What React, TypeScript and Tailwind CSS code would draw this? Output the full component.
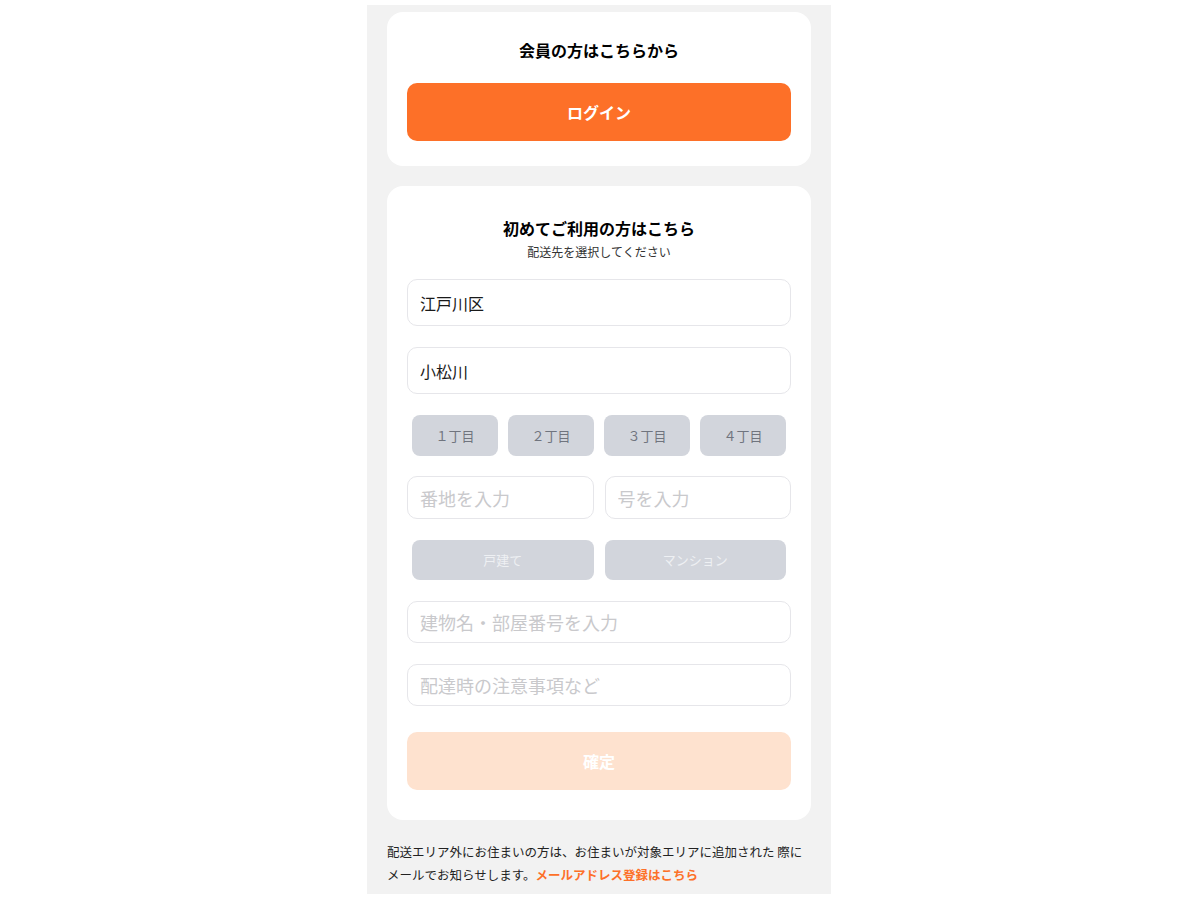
const chome = ['１丁目', '２丁目', '３丁目', '４丁目'];

const inputCls =
    'w-full rounded-[10px] border-[1.5px] border-[#e6e6ea] bg-white px-3 text-[#1a1a1a] outline-none placeholder:text-[#c9c9cc]';

const App = () => {
    return (
        <div className="min-h-screen bg-white py-[5px] pr-[3px]" style={{ fontFamily: '"Noto Sans CJK JP", "Noto Sans", sans-serif' }}>
            <div className="mx-auto w-[464px] bg-[#f2f2f2] px-5 pt-[7px] pb-2">
                {/* Member login */}
                <div className="rounded-2xl bg-white px-5 pt-[26px] pb-[25px]">
                    <h2 className="text-center text-base leading-6 font-bold text-black">会員の方はこちらから</h2>
                    <button className="mt-[21px] flex h-[58px] w-full items-center justify-center rounded-[10px] bg-[#fd7028] text-base font-bold text-white">
                        ログイン
                    </button>
                </div>

                {/* First time */}
                <div className="mt-5 rounded-2xl bg-white px-5 pt-[30px] pb-[30px]">
                    <h2 className="text-center text-base leading-6 font-bold text-black">初めてご利用の方はこちら</h2>
                    <p className="mt-1 text-center text-[12px] leading-4 text-[#333]">配送先を選択してください</p>

                    <input className={`${inputCls} mt-[19px] h-[47px] text-base`} defaultValue="江戸川区" />
                    <input className={`${inputCls} mt-[21px] h-[47px] text-base`} defaultValue="小松川" />

                    <div className="mt-[21px] grid grid-cols-4 gap-[10px] px-[5px]">
                        {chome.map((c) => (
                            <button
                                key={c}
                                className="flex h-[41px] items-center justify-center rounded-lg bg-[#d2d5dc] text-[13px] text-[#70747e]"
                            >
                                {c}
                            </button>
                        ))}
                    </div>

                    <div className="mt-5 grid grid-cols-2 gap-[11px]">
                        <input className={`${inputCls} h-[43px] text-lg`} placeholder="番地を入力" />
                        <input className={`${inputCls} h-[43px] text-lg`} placeholder="号を入力" />
                    </div>

                    <div className="mt-[21px] grid grid-cols-2 gap-[11px] px-[5px]">
                        <button className="flex h-10 items-center justify-center rounded-lg bg-[#d2d5dc] text-[13px] text-[#eef0f3]">
                            戸建て
                        </button>
                        <button className="flex h-10 items-center justify-center rounded-lg bg-[#d2d5dc] text-[13px] text-[#eef0f3]">
                            マンション
                        </button>
                    </div>

                    <input className={`${inputCls} mt-[21px] h-[42px] text-lg`} placeholder="建物名・部屋番号を入力" />
                    <input className={`${inputCls} mt-[21px] h-[42px] text-lg`} placeholder="配達時の注意事項など" />

                    <button className="mt-[26px] flex h-[58px] w-full items-center justify-center rounded-[10px] bg-[#fee2cf] text-base font-bold text-white">
                        確定
                    </button>
                </div>

                <p className="mt-5 text-[12.5px] leading-[23px] text-[#222]">
                    配送エリア外にお住まいの方は、お住まいが対象エリアに追加された 際にメールでお知らせします。<a className="font-bold text-[#fd7028]">メールアドレス登録はこちら</a>
                </p>
            </div>
        </div>
    );
};

export default App;
